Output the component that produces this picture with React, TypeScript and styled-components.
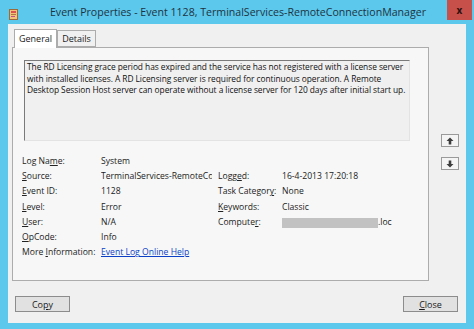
import React from "react";
import styled, { createGlobalStyle } from "styled-components";

const Global = createGlobalStyle`
  html, body { margin: 0; padding: 0; background: #5bc9ee; }
  body { font-family: "Open Sans", "Noto Sans", sans-serif; }
`;

const Window = styled.div`
  width: 474px;
  height: 329px;
  background: #5cc8ec;
  display: flex;
  flex-direction: column;
  overflow: hidden;
  font-family: "Open Sans", "Noto Sans", sans-serif;
  color: #1a1a1a;
`;

const TitleBar = styled.div`
  height: 24px;
  display: grid;
  grid-template-columns: 26px 1fr 28px;
  align-items: start;
`;

const AppIcon = styled.svg`
  margin: 9px 0 0 9px;
  width: 9px;
  height: 11px;
`;

const Title = styled.div`
  font-size: 10.6px;
  line-height: 24px;
  text-align: center;
  color: #1e3342;
  white-space: nowrap;
  margin-left: 4px;
`;

const CloseBtn = styled.div`
  width: 25px;
  height: 20px;
  background: #c7504a;
  color: #2b1010;
  font-size: 10px;
  font-weight: 700;
  display: flex;
  align-items: center;
  justify-content: center;
  margin-left: 1px;
`;

const Client = styled.div`
  flex: 1;
  margin: 0 8px 6px 8px;
  background: #f0f0f0;
  display: flex;
  flex-direction: column;
  padding: 4px 0 0 4px;
`;

const Body = styled.div`
  display: flex;
  gap: 12px;
`;

const TabArea = styled.div`
  display: flex;
  flex-direction: column;
  width: 417px;
`;

const TabStrip = styled.div`
  display: flex;
  align-items: flex-end;
  height: 19px;
  padding-left: 2px;
`;

const Tab = styled.div<{ $active?: boolean }>`
  font-size: 9px;
  line-height: 1;
  padding: ${(p) => (p.$active ? "4px 4px 5px 4px" : "3px 4px 3px 4px")};
  background: ${(p) => (p.$active ? "#ffffff" : "#f0f0f0")};
  border: 1px solid #acacac;
  border-bottom: ${(p) => (p.$active ? "none" : "1px solid #acacac")};
  margin-bottom: ${(p) => (p.$active ? "-1px" : "0")};
  position: relative;
  z-index: ${(p) => (p.$active ? 1 : 0)};
  color: #1a1a1a;
`;

const Panel = styled.div`
  height: 234px;
  box-sizing: border-box;
  border: 1px solid #acacac;
  background: #f7f7f7;
  padding: 12px 0 0 11px;
  display: flex;
  flex-direction: column;
`;

const Description = styled.div`
  width: 386px;
  height: 81px;
  box-sizing: border-box;
  border-top: 1px solid #7a7a7a;
  border-left: 1px solid #7a7a7a;
  border-right: 1px solid #e3e3e3;
  border-bottom: 1px solid #e3e3e3;
  background: #f0f0f0;
  font-size: 8.4px;
  letter-spacing: -0.05px;
  line-height: 11.5px;
  padding: 0 2px;
  color: #111;
`;

const Line = styled.div`
  white-space: nowrap;
`;

const Fields = styled.div`
  margin-top: 12px;
  margin-left: -2px;
  display: grid;
  grid-template-columns: 79px 117px 64px auto;
  grid-auto-rows: 15.3px;
  align-items: center;
  font-size: 8.6px;
`;

const Label = styled.div`
  color: #222;
  white-space: nowrap;
`;

const Value = styled.div`
  color: #222;
  white-space: nowrap;
  overflow: hidden;
  text-overflow: clip;
  margin-right: 6px;
`;

const Link = styled.a`
  color: #0a3fc6;
  text-decoration: underline;
  white-space: nowrap;
  grid-column: 2 / span 3;
`;

const Redacted = styled.span`
  display: inline-block;
  width: 96px;
  height: 10px;
  background: #c2c2c2;
  vertical-align: middle;
`;

const Side = styled.div`
  display: flex;
  flex-direction: column;
  gap: 10px;
  padding-top: 106px;
`;

const ArrowBtn = styled.div`
  width: 18px;
  height: 13px;
  box-sizing: border-box;
  border: 1px solid #9a9a9a;
  background: #f4f4f4;
  display: flex;
  align-items: center;
  justify-content: center;
`;

const Footer = styled.div`
  display: flex;
  justify-content: space-between;
  padding: 15px 8px 0 3px;
`;

const Button = styled.div`
  width: 55px;
  height: 16px;
  box-sizing: border-box;
  border: 1px solid #8c8c8c;
  background: #e1e1e1;
  font-size: 9px;
  display: flex;
  align-items: center;
  justify-content: center;
  color: #1a1a1a;
`;

const U = styled.span`
  text-decoration: underline;
`;

const Arrow = ({ down }: { down?: boolean }) => (
  <svg width="8" height="8" viewBox="0 0 8 8" style={down ? { transform: "rotate(180deg)" } : undefined}>
    <path d="M4 0.5 L7.5 4 L5.3 4 L5.3 7.5 L2.7 7.5 L2.7 4 L0.5 4 Z" fill="#3c3c3c" />
  </svg>
);

export default function App() {
  return (
    <>
      <Global />
      <Window>
        <TitleBar>
          <AppIcon viewBox="0 0 9 11">
            <rect x="0.5" y="0.5" width="8" height="10" fill="#f4c37a" stroke="#9b6b3a" strokeWidth="1" />
            <rect x="2" y="2" width="5" height="2" fill="#d9534f" />
            <rect x="2" y="5" width="5" height="1" fill="#b07a45" />
            <rect x="2" y="7" width="4" height="1" fill="#c54f8e" />
          </AppIcon>
          <Title>Event Properties - Event 1128, TerminalServices-RemoteConnectionManager</Title>
          <CloseBtn>x</CloseBtn>
        </TitleBar>
        <Client>
          <Body>
            <TabArea>
              <TabStrip>
                <Tab $active>General</Tab>
                <Tab>Details</Tab>
              </TabStrip>
              <Panel>
                <Description>
                  <Line>The RD Licensing grace period has expired and the service has not registered with a license server</Line>
                  <Line>with installed licenses. A RD Licensing server is required for continuous operation. A Remote</Line>
                  <Line>Desktop Session Host server can operate without a license server for 120 days after initial start up.</Line>
                </Description>
                <Fields>
                  <Label>Log Na<U>m</U>e:</Label>
                  <Value>System</Value>
                  <Label />
                  <Value />
                  <Label><U>S</U>ource:</Label>
                  <Value>TerminalServices-RemoteConnectionManager</Value>
                  <Label>Logg<U>e</U>d:</Label>
                  <Value>16-4-2013 17:20:18</Value>
                  <Label><U>E</U>vent ID:</Label>
                  <Value>1128</Value>
                  <Label>Task Categor<U>y</U>:</Label>
                  <Value>None</Value>
                  <Label><U>L</U>evel:</Label>
                  <Value>Error</Value>
                  <Label><U>K</U>eywords:</Label>
                  <Value>Classic</Value>
                  <Label><U>U</U>ser:</Label>
                  <Value>N/A</Value>
                  <Label>Compute<U>r</U>:</Label>
                  <Value><Redacted />.loc</Value>
                  <Label><U>O</U>pCode:</Label>
                  <Value>Info</Value>
                  <Label />
                  <Value />
                  <Label>More <U>I</U>nformation:</Label>
                  <Link>Event Log Online Help</Link>
                </Fields>
              </Panel>
            </TabArea>
            <Side>
              <ArrowBtn><Arrow /></ArrowBtn>
              <ArrowBtn><Arrow down /></ArrowBtn>
            </Side>
          </Body>
          <Footer>
            <Button>Co<U>p</U>y</Button>
            <Button><U>C</U>lose</Button>
          </Footer>
        </Client>
      </Window>
    </>
  );
}
